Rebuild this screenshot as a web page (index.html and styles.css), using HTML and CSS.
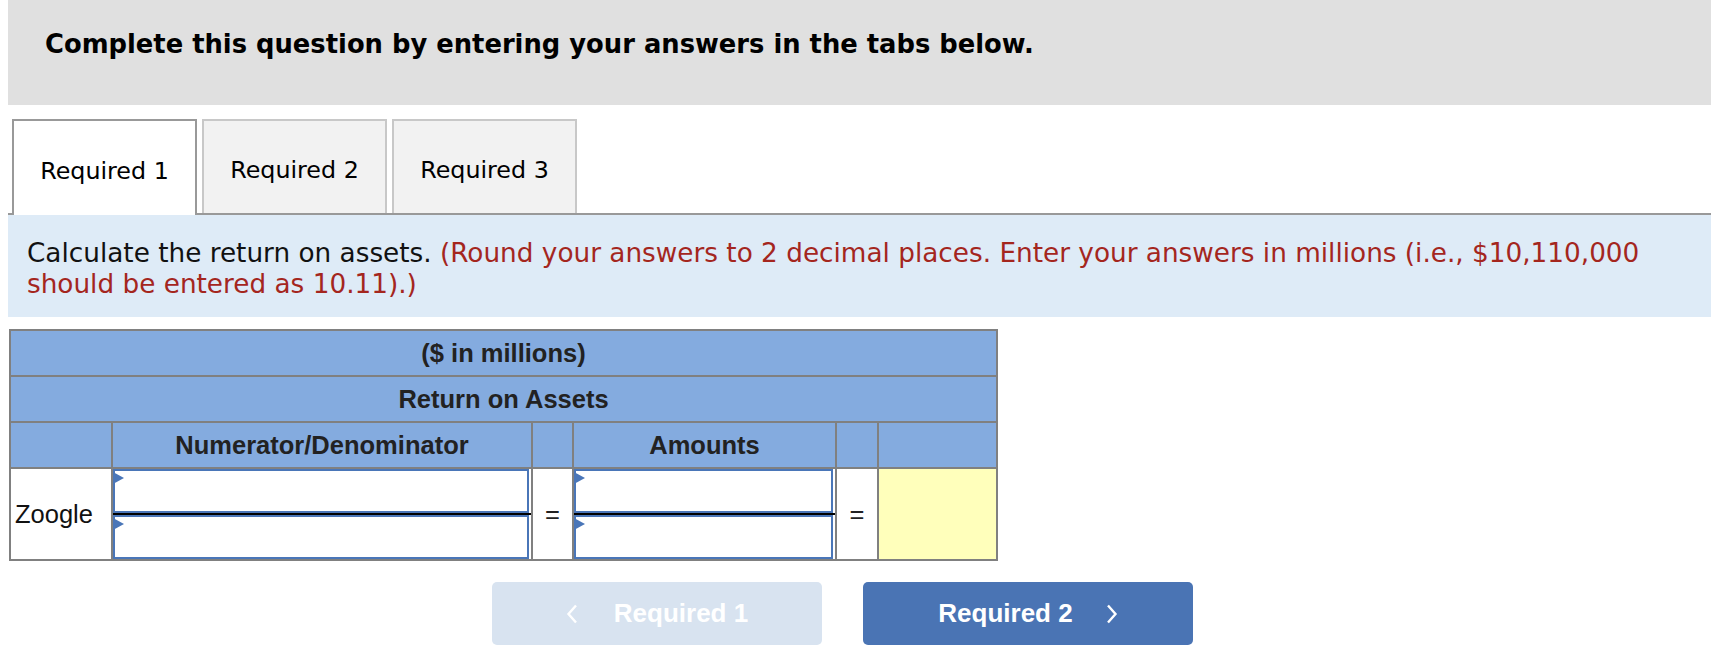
FILE: index.html
```html
<!DOCTYPE html>
<html lang="en">
<head>
<meta charset="UTF-8">
<meta name="viewport" content="width=device-width, initial-scale=1.0">
<title>Return on Assets</title>
<link rel="stylesheet" href="styles.css">
</head>
<body>

<div class="page">

  <div class="intro">
    <h2>Complete this question by entering your answers in the tabs below.</h2>
  </div>

  <div class="tabs">
    <div class="tab active">Required 1</div>
    <div class="tab">Required 2</div>
    <div class="tab">Required 3</div>
  </div>

  <div class="instructions">
    <p>Calculate the return on assets. <span class="hint">(Round your answers to 2 decimal places. Enter your answers in millions (i.e., $10,110,000<br>should be entered as 10.11).)</span></p>
  </div>

  <table class="worksheet">
    <colgroup>
      <col class="col-label">
      <col class="col-fraction">
      <col class="col-equals">
      <col class="col-amounts">
      <col class="col-equals2">
      <col class="col-result">
    </colgroup>
    <tr class="head-row">
      <th colspan="6">($ in millions)</th>
    </tr>
    <tr class="head-row">
      <th colspan="6">Return on Assets</th>
    </tr>
    <tr class="head-row">
      <th></th>
      <th>Numerator/Denominator</th>
      <th></th>
      <th>Amounts</th>
      <th></th>
      <th></th>
    </tr>
    <tr class="data-row">
      <td class="label">Zoogle</td>
      <td class="fraction">
        <div class="answer"><input type="text"></div>
        <div class="bar"></div>
        <div class="answer"><input type="text"></div>
      </td>
      <td class="equals">=</td>
      <td class="fraction">
        <div class="answer"><input type="text"></div>
        <div class="bar"></div>
        <div class="answer"><input type="text"></div>
      </td>
      <td class="equals">=</td>
      <td class="result"></td>
    </tr>
  </table>

  <div class="nav">
    <button class="nav-btn prev">
      <svg width="12" height="20" viewBox="0 0 12 20"><polyline points="10,1.5 2.5,10 10,18.5" fill="none" stroke="#fff" stroke-width="2.4"/></svg>
      <span>Required 1</span>
    </button>
    <button class="nav-btn next">
      <span>Required 2</span>
      <svg width="12" height="20" viewBox="0 0 12 20"><polyline points="2,1.5 9.5,10 2,18.5" fill="none" stroke="#fff" stroke-width="2.4"/></svg>
    </button>
  </div>

</div>

</body>
</html>
```

FILE: styles.css
```css
body {
  margin: 0;
  padding: 0 8px;
  font-family: "DejaVu Sans", Verdana, sans-serif;
  color: #000;
  background: #fff;
}

.page {
  width: 1703px;
}

.intro {
  background: #e0e0e0;
  height: 105px;
  box-sizing: border-box;
  padding: 29px 37px 0;
}

.intro h2 {
  margin: 0;
  font-size: 25.8px;
  line-height: 30px;
  font-weight: bold;
}

.tabs {
  display: flex;
  gap: 5px;
  margin-top: 14px;
  padding-left: 4px;
  border-bottom: 2px solid #999;
}

.tab {
  width: 185px;
  height: 94px;
  box-sizing: border-box;
  padding-top: 6px;
  display: flex;
  align-items: center;
  justify-content: center;
  background: #f2f2f2;
  border: 2px solid #c8c8c8;
  border-bottom: none;
  font-size: 23.8px;
  color: #000;
}

.tab.active {
  background: #fff;
  border-color: #999;
  height: 96px;
  margin-bottom: -2px;
}

.instructions {
  background: #deebf7;
  padding: 23px 10px 17px 19px;
}

.instructions p {
  margin: 0;
  font-size: 26.3px;
  line-height: 31px;
  color: #111;
}

.hint {
  color: #a4261e;
}

.worksheet {
  margin-top: 12px;
  margin-left: 1px;
  width: 987px;
  table-layout: fixed;
  border-collapse: collapse;
  border: 2px solid #808080;
  font-family: "Liberation Sans", Arial, sans-serif;
  font-size: 25.5px;
  color: #222;
}

.col-label { width: 102px; }
.col-fraction { width: 420px; }
.col-equals { width: 41px; }
.col-amounts { width: 263px; }
.col-equals2 { width: 42px; }
.col-result { width: 119px; }

.worksheet th,
.worksheet td {
  border: 2px solid #808080;
  padding: 0;
}

.worksheet th {
  background: #84abdf;
  font-weight: bold;
  text-align: center;
}

.head-row {
  height: 46px;
}

.data-row {
  height: 92px;
}

.worksheet td.label {
  padding-left: 4px;
  text-align: left;
  color: #111;
}

.worksheet td.fraction {
  vertical-align: top;
}

.answer {
  position: relative;
  height: 44px;
  width: calc(100% - 2px);
  box-sizing: border-box;
  border: 2px solid #4a76b8;
  background: #fff;
}

.answer::before {
  content: "";
  position: absolute;
  left: -2px;
  top: 1px;
  border-left: 11px solid #4a76b8;
  border-top: 6px solid transparent;
  border-bottom: 6px solid transparent;
}

.answer input {
  width: 100%;
  height: 100%;
  box-sizing: border-box;
  border: none;
  background: transparent;
  outline: none;
  font-size: 22px;
}

.bar {
  height: 2px;
  background: #000;
}

.worksheet td.equals {
  text-align: center;
  background: #fff;
}

.worksheet td.result {
  background: #ffffbb;
}

.nav {
  display: flex;
  gap: 41px;
  margin-top: 21px;
  padding-left: 484px;
}

.nav-btn {
  width: 330px;
  height: 63px;
  border: none;
  border-radius: 5px;
  display: flex;
  align-items: center;
  justify-content: center;
  font-family: "Liberation Sans", Arial, sans-serif;
  font-size: 26px;
  font-weight: bold;
  color: #fff;
  cursor: pointer;
}

.nav-btn.prev {
  background: #d8e3f0;
  gap: 36px;
}

.nav-btn.next {
  background: #4a74b4;
  gap: 33px;
}
```
